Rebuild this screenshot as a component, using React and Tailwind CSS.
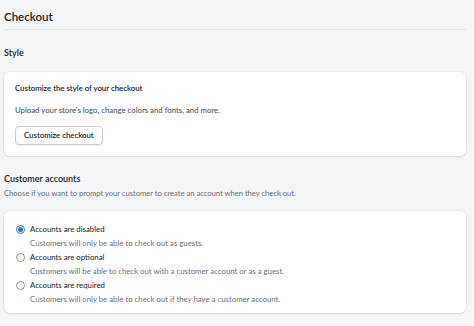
import React, { useState } from 'react';

const options = [
  { id: 'disabled', label: 'Accounts are disabled', help: 'Customers will only be able to check out as guests.' },
  { id: 'optional', label: 'Accounts are optional', help: 'Customers will be able to check out with a customer account or as a guest.' },
  { id: 'required', label: 'Accounts are required', help: 'Customers will only be able to check out if they have a customer account.' },
];

function Radio({ checked }) {
  return (
    <span
      className={`flex h-[9px] w-[9px] shrink-0 items-center justify-center rounded-full border ${
        checked ? 'border-[#2c6ecb]' : 'border-[#8c9196] bg-white'
      }`}
    >
      {checked && <span className="h-[5px] w-[5px] rounded-full bg-[#2c6ecb]"></span>}
    </span>
  );
}

export default function App() {
  const [accounts, setAccounts] = useState('disabled');

  return (
    <div
      className="min-h-screen bg-[#f4f5f6] px-[4px] pr-[8px] text-[#202223]"
      style={{ fontFamily: 'Lato, "Noto Sans", sans-serif' }}
    >
      {/* ===== Page header ===== */}
      <div className="border-b border-[#e4e5e7] pt-[8px] pb-[4px]">
        <h1 className="text-[11.5px] leading-[17px] font-semibold">Checkout</h1>
      </div>

      {/* ===== Style ===== */}
      <h2 className="mt-[17px] text-[9px] leading-[12px] font-semibold">Style</h2>
      <div className="mt-[13px] rounded-[6px] bg-white px-[11px] pt-[11px] pb-[11px] shadow-[0_0_0_1px_rgba(63,63,68,0.04),0_1px_2px_rgba(63,63,68,0.12)]">
        <p className="text-[7.8px] leading-[11px] font-semibold">Customize the style of your checkout</p>
        <p className="mt-[11px] text-[7.8px] leading-[11px] text-[#44474a]">
          Upload your store's logo, change colors and fonts, and more.
        </p>
        <button className="mt-[10px] h-[19px] rounded-[4px] border border-[#c9cccf] bg-white px-[8px] text-[7.8px] font-semibold shadow-[0_1px_0_rgba(0,0,0,0.05)]">
          Customize checkout
        </button>
      </div>

      {/* ===== Customer accounts ===== */}
      <h2 className="mt-[17px] text-[9px] leading-[12px] font-semibold">Customer accounts</h2>
      <p className="mt-[3px] text-[7.6px] leading-[11px] text-[#6d7175]">
        Choose if you want to prompt your customer to create an account when they check out.
      </p>
      <div className="mt-[12px] flex flex-col gap-[3px] rounded-[6px] bg-white px-[12px] pt-[13px] pb-[8px] shadow-[0_0_0_1px_rgba(63,63,68,0.04),0_1px_2px_rgba(63,63,68,0.12)]">
        {options.map((opt) => (
          <label key={opt.id} className="flex cursor-pointer flex-col" onClick={() => setAccounts(opt.id)}>
            <span className="flex h-[11px] items-center gap-[5px]">
              <Radio checked={accounts === opt.id} />
              <span className="text-[7.8px] leading-[11px]">{opt.label}</span>
            </span>
            <span className="mt-[3px] pl-[14px] text-[7.8px] leading-[11px] text-[#6d7175]">{opt.help}</span>
          </label>
        ))}
      </div>
    </div>
  );
}
